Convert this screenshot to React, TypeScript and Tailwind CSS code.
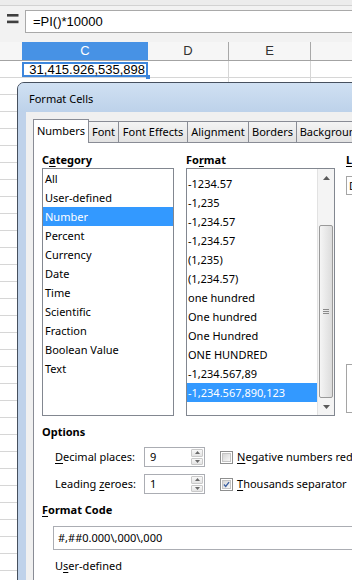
import React from "react";

const categories = ["All", "User-defined", "Number", "Percent", "Currency", "Date", "Time", "Scientific", "Fraction", "Boolean Value", "Text"];
const formats = ["-1234.57", "-1,235", "-1,234.57", "-1,234.57", "(1,235)", "(1,234.57)", "one hundred", "One hundred", "One Hundred", "ONE HUNDRED", "-1,234.567,89", "-1,234.567,890,123"];

function U({ children }: { children: React.ReactNode }) {
  return <span className="underline decoration-1 underline-offset-2">{children}</span>;
}

function Tri({ up }: { up?: boolean }) {
  return (
    <svg width="7" height="4" viewBox="0 0 7 4">
      {up ? <path d="M0 4 L3.5 0 L7 4Z" fill="#5a5a5a" /> : <path d="M0 0 L3.5 4 L7 0Z" fill="#5a5a5a" />}
    </svg>
  );
}

function SmallTri({ up }: { up?: boolean }) {
  return (
    <svg width="5" height="3" viewBox="0 0 5 3">
      {up ? <path d="M0 3 L2.5 0 L5 3Z" fill="#6a6a6a" /> : <path d="M0 0 L2.5 3 L5 0Z" fill="#6a6a6a" />}
    </svg>
  );
}

function SpinField({ value }: { value: string }) {
  return (
    <div className="flex h-[20px] w-[61px] border border-[#abadb3] bg-white">
      <div className="flex-1 pl-[5px] leading-[18px]">{value}</div>
      <div className="my-[1px] mr-[1px] flex w-[12px] flex-col gap-[1px]">
        <div className="flex flex-1 items-center justify-center rounded-[1px] border border-[#c9c9c9] bg-gradient-to-b from-[#f8f8f8] to-[#e4e4e4]">
          <SmallTri up />
        </div>
        <div className="flex flex-1 items-center justify-center rounded-[1px] border border-[#c9c9c9] bg-gradient-to-b from-[#f8f8f8] to-[#e4e4e4]">
          <SmallTri />
        </div>
      </div>
    </div>
  );
}

function Check({ checked }: { checked?: boolean }) {
  return (
    <div className="flex h-[13px] w-[13px] items-center justify-center border border-[#8e8f8f] bg-white">
      <div className="flex h-[9px] w-[9px] items-center justify-center border border-[#c4c4c4] bg-gradient-to-br from-[#d6d6d6] to-[#f8f8f8]">
        {checked && (
          <svg width="9" height="9" viewBox="0 0 9 9">
            <path d="M1.2 4.6 L3.5 7 L7.8 1.5" fill="none" stroke="#3b5fa0" strokeWidth="1.7" />
          </svg>
        )}
      </div>
    </div>
  );
}

function Tab({ label, selected, w }: { label: string; selected?: boolean; w: number }) {
  if (selected) {
    return (
      <div
        className="relative z-10 -mb-px flex h-[24px] shrink-0 items-center justify-center border border-b-0 border-[#898c95] bg-white"
        style={{ width: w }}
      >
        {label}
      </div>
    );
  }
  return (
    <div
      className="-ml-px flex h-[21px] shrink-0 items-center justify-center border border-b-0 border-[#898c95] bg-gradient-to-b from-[#f4f4f4] to-[#e2e2e2] whitespace-nowrap"
      style={{ width: w }}
    >
      {label}
    </div>
  );
}

function SheetRow({ first }: { first?: boolean }) {
  return (
    <div className="flex h-[17px] shrink-0 border-b border-[#d6d6d6]">
      <div className="w-[22px] shrink-0" />
      <div className="relative w-[126px] shrink-0">
        {first && (
          <>
            <div className="absolute inset-x-0 top-[1px] bottom-0 border-2 border-[#3d86dc]" />
            <div className="absolute right-[-2px] bottom-[-2px] h-[4px] w-[4px] bg-[#3d86dc]" />
            <div className="absolute inset-0 pr-[3px] text-right text-[13px] leading-[17px] text-black">31,415.926,535,898</div>
          </>
        )}
      </div>
      <div className="w-[81px] shrink-0 border-r border-[#d6d6d6]" />
      <div className="w-[82px] shrink-0 border-r border-[#d6d6d6]" />
      <div className="flex-1" />
    </div>
  );
}

export default function App() {
  return (
    <div className="relative h-[580px] w-[352px] overflow-hidden bg-white font-['Liberation_Sans',sans-serif]">
      {/* top toolbar remnant */}
      <div className="h-[6px] border-b border-[#d2d2d2] bg-[#ececec]" />
      {/* formula bar */}
      <div className="flex h-[36px] items-start bg-[#f2f2f2] pt-[4px]">
        <div className="flex w-[25px] shrink-0 justify-start pt-[4px] pl-[7px]">
          <svg width="12" height="10" viewBox="0 0 12 10">
            <rect x="0" y="0" width="11.5" height="2.6" fill="#3f3f3f" />
            <rect x="0" y="6.6" width="11.5" height="2.6" fill="#3f3f3f" />
          </svg>
        </div>
        <div className="h-[23px] flex-1 border border-r-0 border-[#a9a9a9] bg-white pl-[7px] text-[13px] leading-[21px] text-black">
          =PI()*10000
        </div>
      </div>
      {/* column headers */}
      <div className="flex h-[19px] border-b border-[#a3a3a3] bg-[#f6f6f6] text-[13px]">
        <div className="w-[22px] shrink-0" />
        <div className="flex w-[126px] shrink-0 items-center justify-center bg-[#4792e5] text-white">C</div>
        <div className="flex w-[81px] shrink-0 items-center justify-center border-r border-[#a8a8a8] text-[#333]">D</div>
        <div className="flex w-[82px] shrink-0 items-center justify-center border-r border-[#a8a8a8] text-[#333]">E</div>
        <div className="flex-1" />
      </div>
      <SheetRow first />
      {Array.from({ length: 30 }).map((_, i) => (
        <SheetRow key={i} />
      ))}

      {/* Format Cells dialog */}
      <div className="absolute left-[17px] top-[82px] flex h-[520px] w-[420px] flex-col rounded-t-[7px] border border-[#46505e] bg-[#bfd2ea] font-['Noto_Sans',sans-serif] text-[11px] text-black">
        <div className="flex h-[29px] shrink-0 items-center rounded-t-[6px] bg-gradient-to-b from-[#d0e0f2] to-[#bdd2ea] pl-[11px] pt-[3px] text-[11px]">
          Format Cells
        </div>
        <div className="ml-[8px] flex flex-1 flex-col bg-[#f0f0f0] pl-[7px] pt-[7px]">
          <div className="flex h-[23px] items-end">
            <Tab label="Numbers" selected w={56} />
            <Tab label="Font" w={31} />
            <Tab label="Font Effects" w={70} />
            <Tab label="Alignment" w={62} />
            <Tab label="Borders" w={49} />
            <Tab label="Background" w={70} />
          </div>
          <div className="flex flex-1 flex-col border border-[#898c95] bg-white pl-[8px] pt-[9px]">
            <div className="flex">
              {/* Category */}
              <div className="flex w-[132px] shrink-0 flex-col">
                <div className="h-[16px] font-bold leading-[16px]">
                  C<U>a</U>tegory
                </div>
                <div className="h-[248px] border border-[#828790] bg-white">
                  {categories.map((c) => (
                    <div
                      key={c}
                      className={`h-[19px] pl-[2px] leading-[19px] ${c === "Number" ? "bg-[#3399ff] text-white" : ""}`}
                    >
                      {c}
                    </div>
                  ))}
                </div>
              </div>
              {/* Format */}
              <div className="ml-[12px] flex w-[149px] shrink-0 flex-col">
                <div className="h-[16px] font-bold leading-[16px]">
                  Fo<U>r</U>mat
                </div>
                <div className="flex h-[248px] border border-[#828790] bg-white">
                  <div className="flex-1 overflow-hidden pt-[5px]">
                    {formats.map((f, i) => (
                      <div
                        key={i}
                        className={`h-[19px] pl-[1px] leading-[19px] whitespace-nowrap ${i === formats.length - 1 ? "bg-[#3399ff] text-white" : ""}`}
                      >
                        {f}
                      </div>
                    ))}
                  </div>
                  <div className="flex w-[17px] shrink-0 flex-col border-l border-[#e2e2e2] bg-[#f4f4f4]">
                    <div className="flex h-[17px] items-center justify-center">
                      <Tri up />
                    </div>
                    <div className="flex flex-1 flex-col pt-[39px] pb-[1px]">
                      <div className="mx-[1px] flex flex-1 items-center justify-center rounded-[2px] border border-[#9a9a9a] bg-gradient-to-r from-[#f5f5f5] to-[#dcdcdc]">
                        <div className="flex w-[6px] flex-col gap-[1px]">
                          <div className="h-px bg-[#8a8a8a]" />
                          <div className="h-px bg-[#8a8a8a]" />
                          <div className="h-px bg-[#8a8a8a]" />
                        </div>
                      </div>
                    </div>
                    <div className="flex h-[16px] items-center justify-center">
                      <Tri />
                    </div>
                  </div>
                </div>
              </div>
              {/* Language */}
              <div className="ml-[11px] flex w-[160px] shrink-0 flex-col">
                <div className="h-[16px] font-bold leading-[16px]">
                  <U>L</U>anguage
                </div>
                <div className="mt-[8px] h-[19px] border border-[#a5a5a5] bg-white pl-[2px] leading-[17px] whitespace-nowrap">
                  Default - English (USA)
                </div>
                <div className="mt-auto mb-[3px] h-[49px] border border-[#a5a5a5] bg-white" />
              </div>
            </div>

            {/* Options */}
            <div className="mt-[8px] h-[16px] font-bold leading-[16px]">Options</div>
            <div className="mt-[7px] flex h-[20px] items-center">
              <div className="ml-[13px] w-[89px] shrink-0">
                <U>D</U>ecimal places:
              </div>
              <SpinField value="9" />
              <div className="ml-[15px] flex items-center gap-[4px] whitespace-nowrap">
                <Check />
                <span>
                  <U>N</U>egative numbers red
                </span>
              </div>
            </div>
            <div className="mt-[7px] flex h-[20px] items-center">
              <div className="ml-[13px] w-[89px] shrink-0">
                Leading <U>z</U>eroes:
              </div>
              <SpinField value="1" />
              <div className="ml-[15px] flex items-center gap-[4px] whitespace-nowrap">
                <Check checked />
                <span>
                  <U>T</U>housands separator
                </span>
              </div>
            </div>

            {/* Format code */}
            <div className="mt-[8px] h-[16px] font-bold leading-[16px]">
              <U>F</U>ormat Code
            </div>
            <div className="mt-[8px] ml-[11px] h-[24px] border border-[#abadb3] bg-white pl-[4px] leading-[22px]">
              #,##0.000\,000\,000
            </div>
            <div className="mt-[8px] ml-[13px] h-[16px] leading-[16px]">
              U<U>s</U>er-defined
            </div>
          </div>
        </div>
      </div>
    </div>
  );
}
